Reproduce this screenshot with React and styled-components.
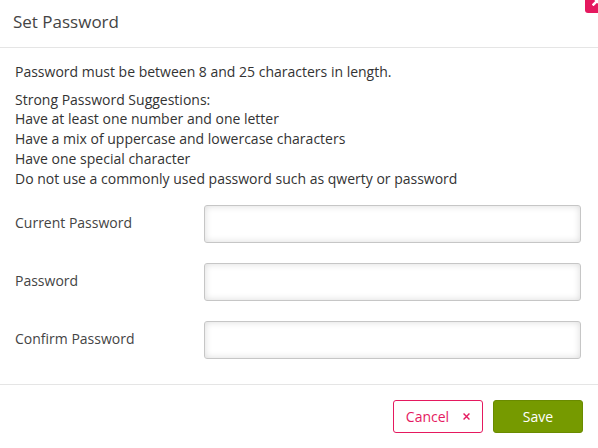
import React from "react";
import styled, { createGlobalStyle } from "styled-components";

const Global = createGlobalStyle`
  html, body { margin: 0; padding: 0; background: #fff; }
  body { font-family: "Open Sans", "Liberation Sans", sans-serif; color: #333; }
  * { box-sizing: border-box; }
`;

const Modal = styled.div`
  position: relative;
  width: 598px;
  height: 448px;
  background: #fff;
  display: flex;
  flex-direction: column;
  overflow: hidden;
`;

const Header = styled.div`
  height: 48px;
  display: flex;
  align-items: center;
  padding: 0 13px 4px;
  border-bottom: 1px solid #e5e5e5;
`;

const Title = styled.h1`
  margin: 0;
  font-size: 17px;
  font-weight: 400;
  color: #444;
`;

const CloseButton = styled.button`
  position: absolute;
  top: -11px;
  right: -11px;
  width: 24px;
  height: 24px;
  border: none;
  border-radius: 3px;
  background: #e5195f;
  padding: 0;
  display: flex;
  align-items: center;
  justify-content: center;
`;

const Body = styled.div`
  padding: 14px 15px 0;
`;

const Para = styled.p`
  margin: 0 0 8px;
  font-size: 14px;
  line-height: 19.7px;
`;

const Form = styled.div`
  display: flex;
  flex-direction: column;
  gap: 20px;
  margin-top: 17px;
  padding-right: 2px;
`;

const Row = styled.div`
  display: grid;
  grid-template-columns: 189px 1fr;
  align-items: center;
`;

const Label = styled.label`
  font-size: 14px;
  color: #444;
  padding-bottom: 4px;
`;

const Input = styled.input`
  height: 38px;
  border: 1px solid #c6c6c6;
  border-radius: 3px;
  background: #fff;
  box-shadow: inset 0 0 7px rgba(0, 0, 0, 0.15);
  padding: 0 8px;
  font-size: 14px;
  outline: none;
`;

const Footer = styled.div`
  margin-top: auto;
  border-top: 1px solid #e5e5e5;
  padding: 15px;
  display: flex;
  justify-content: flex-end;
  gap: 10px;
`;

const Button = styled.button`
  width: 90px;
  height: 33px;
  border-radius: 3px;
  font-family: "Open Sans", "Liberation Sans", sans-serif;
  font-size: 14px;
  display: flex;
  align-items: center;
  justify-content: center;
  gap: 14px;
  cursor: pointer;
  border: 1px solid ${(p) => (p.$primary ? "#6a8b00" : "#e5195f")};
  background: ${(p) => (p.$primary ? "#769a00" : "#fff")};
  color: ${(p) => (p.$primary ? "#fff" : "#e5195f")};
`;

const XIcon = ({ size = 8, stroke = "currentColor", width = 2 }) => (
  <svg width={size} height={size} viewBox="0 0 10 10" aria-hidden="true">
    <path d="M1.5 1.5 L8.5 8.5 M8.5 1.5 L1.5 8.5" stroke={stroke} strokeWidth={width * 1.25} strokeLinecap="square" fill="none" />
  </svg>
);

const fields = ["Current Password", "Password", "Confirm Password"];

export default function App() {
  return (
    <>
      <Global />
      <Modal>
        <Header>
          <Title>Set Password</Title>
        </Header>
        <CloseButton aria-label="Close">
          <XIcon size={10} stroke="#fff" width={2} />
        </CloseButton>
        <Body>
          <Para>Password must be between 8 and 25 characters in length.</Para>
          <Para>
            Strong Password Suggestions:
            <br />
            Have at least one number and one letter
            <br />
            Have a mix of uppercase and lowercase characters
            <br />
            Have one special character
            <br />
            Do not use a commonly used password such as qwerty or password
          </Para>
          <Form>
            {fields.map((f) => (
              <Row key={f}>
                <Label>{f}</Label>
                <Input type="password" />
              </Row>
            ))}
          </Form>
        </Body>
        <Footer>
          <Button>
            Cancel <XIcon size={7} width={1.6} />
          </Button>
          <Button $primary>Save</Button>
        </Footer>
      </Modal>
    </>
  );
}
